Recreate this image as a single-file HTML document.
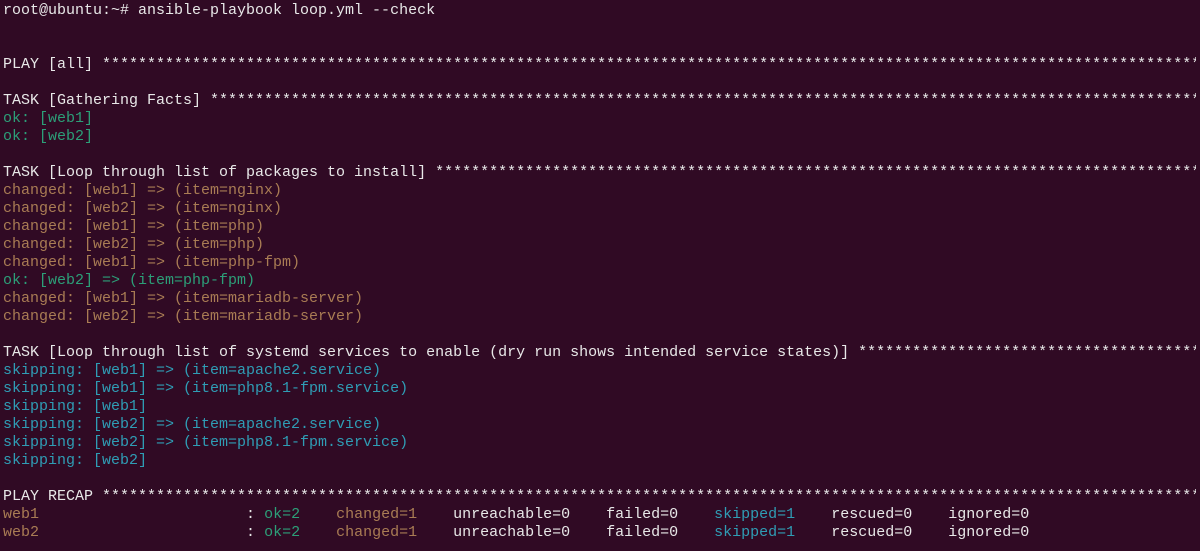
<!DOCTYPE html>
<html><head><meta charset="utf-8"><style>
html,body{margin:0;padding:0;background:#300a24;width:1200px;height:551px;overflow:hidden}
pre{margin:0;padding:2px 0 0 3px;font-family:"Liberation Mono",monospace;font-size:15px;line-height:18px;color:#e8e8e8;white-space:pre;overflow:hidden;width:1193px}
.g{color:#2c9f78}.y{color:#a97c54}.c{color:#2f9db5}
</style></head><body><pre>root@ubuntu:~# ansible-playbook loop.yml --check


PLAY [all] ******************************************************************************************************************************

TASK [Gathering Facts] ******************************************************************************************************************
<span class="g">ok: [web1]</span>
<span class="g">ok: [web2]</span>

TASK [Loop through list of packages to install] *****************************************************************************************
<span class="y">changed: [web1] =&gt; (item=nginx)</span>
<span class="y">changed: [web2] =&gt; (item=nginx)</span>
<span class="y">changed: [web1] =&gt; (item=php)</span>
<span class="y">changed: [web2] =&gt; (item=php)</span>
<span class="y">changed: [web1] =&gt; (item=php-fpm)</span>
<span class="g">ok: [web2] =&gt; (item=php-fpm)</span>
<span class="y">changed: [web1] =&gt; (item=mariadb-server)</span>
<span class="y">changed: [web2] =&gt; (item=mariadb-server)</span>

TASK [Loop through list of systemd services to enable (dry run shows intended service states)] ******************************************
<span class="c">skipping: [web1] =&gt; (item=apache2.service)</span>
<span class="c">skipping: [web1] =&gt; (item=php8.1-fpm.service)</span>
<span class="c">skipping: [web1]</span>
<span class="c">skipping: [web2] =&gt; (item=apache2.service)</span>
<span class="c">skipping: [web2] =&gt; (item=php8.1-fpm.service)</span>
<span class="c">skipping: [web2]</span>

PLAY RECAP ******************************************************************************************************************************
<span class="y">web1</span>                       : <span class="g">ok=2</span>    <span class="y">changed=1</span>    unreachable=0    failed=0    <span class="c">skipped=1</span>    rescued=0    ignored=0
<span class="y">web2</span>                       : <span class="g">ok=2</span>    <span class="y">changed=1</span>    unreachable=0    failed=0    <span class="c">skipped=1</span>    rescued=0    ignored=0
</pre></body></html>
